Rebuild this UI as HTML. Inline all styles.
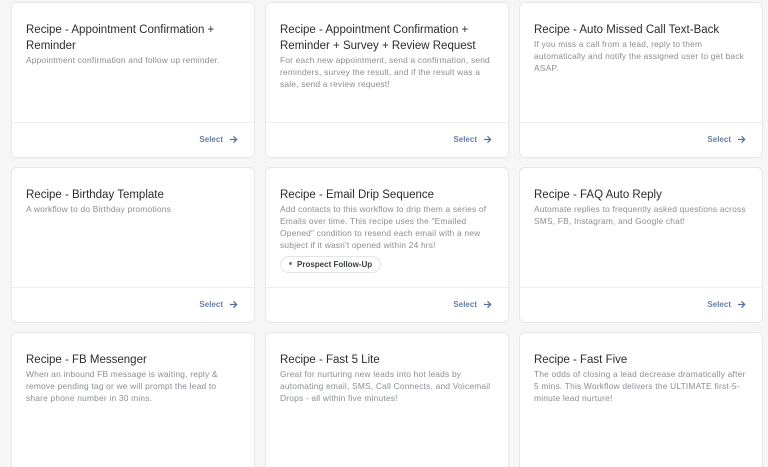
<!DOCTYPE html>
<html><head><style>
html,body{margin:0;background:#f6f6f7;width:768px;height:467px;overflow:hidden;font-family:"Liberation Sans",sans-serif;position:relative}
.c{position:absolute;width:244px;background:#fff;border:1px solid #e6e7ea;border-radius:6px;box-sizing:border-box;overflow:hidden}
.b{padding:14px 14px 0 14px;position:absolute;left:0;right:0;top:0}
.t{font-size:11.5px;color:#2a2c30;line-height:16px;margin:5px 0 0}
.d{font-size:8.4px;letter-spacing:.2px;color:#8a8d93;line-height:12px;margin-top:0}
.f{position:absolute;left:0;right:0;bottom:0;height:34px;border-top:1px solid #eceef1}
.s{position:absolute;right:16px;top:12px;font-size:8px;color:#6a7ca5;font-weight:bold}
.s svg{vertical-align:-2px;margin-left:6px}
.tag{display:inline-block;margin-top:5px;border:1px solid #e3e4e8;border-radius:10px;font-size:8px;font-weight:bold;color:#3a3c44;padding:3px 8px}
.tag i{display:inline-block;width:3px;height:3px;border-radius:50%;background:#6b6fb5;vertical-align:2px;margin-right:5px}
</style></head><body>
<div class="c" style="left:11px;top:2px;height:156px"><div class="b"><div class="t">Recipe - Appointment Confirmation +<br>Reminder</div><div class="d">Appointment confirmation and follow up reminder.</div></div><div class="f"><span class="s">Select<svg width="9" height="9" viewBox="0 0 10 10"><path d="M1 5h7M5 1.5L8.5 5 5 8.5" stroke="#5b6f9a" stroke-width="1.4" fill="none"/></svg></span></div></div>
<div class="c" style="left:265px;top:2px;height:156px"><div class="b"><div class="t">Recipe - Appointment Confirmation +<br>Reminder + Survey + Review Request</div><div class="d">For each new appointment, send a confirmation, send reminders, survey the result, and if the result was a sale, send a review request!</div></div><div class="f"><span class="s">Select<svg width="9" height="9" viewBox="0 0 10 10"><path d="M1 5h7M5 1.5L8.5 5 5 8.5" stroke="#5b6f9a" stroke-width="1.4" fill="none"/></svg></span></div></div>
<div class="c" style="left:519px;top:2px;height:156px"><div class="b"><div class="t">Recipe - Auto Missed Call Text-Back</div><div class="d">If you miss a call from a lead, reply to them automatically and notify the assigned user to get back ASAP.</div></div><div class="f"><span class="s">Select<svg width="9" height="9" viewBox="0 0 10 10"><path d="M1 5h7M5 1.5L8.5 5 5 8.5" stroke="#5b6f9a" stroke-width="1.4" fill="none"/></svg></span></div></div>
<div class="c" style="left:11px;top:167px;height:156px"><div class="b"><div class="t">Recipe - Birthday Template</div><div class="d">A workflow to do Birthday promotions</div></div><div class="f"><span class="s">Select<svg width="9" height="9" viewBox="0 0 10 10"><path d="M1 5h7M5 1.5L8.5 5 5 8.5" stroke="#5b6f9a" stroke-width="1.4" fill="none"/></svg></span></div></div>
<div class="c" style="left:265px;top:167px;height:156px"><div class="b"><div class="t">Recipe - Email Drip Sequence</div><div class="d">Add contacts to this workflow to drip them a series of Emails over time. This recipe uses the "Emailed Opened" condition to resend each email with a new subject if it wasn't opened within 24 hrs!</div><span class="tag"><i></i>Prospect Follow-Up</span></div><div class="f"><span class="s">Select<svg width="9" height="9" viewBox="0 0 10 10"><path d="M1 5h7M5 1.5L8.5 5 5 8.5" stroke="#5b6f9a" stroke-width="1.4" fill="none"/></svg></span></div></div>
<div class="c" style="left:519px;top:167px;height:156px"><div class="b"><div class="t">Recipe - FAQ Auto Reply</div><div class="d">Automate replies to frequently asked questions across SMS, FB, Instagram, and Google chat!</div></div><div class="f"><span class="s">Select<svg width="9" height="9" viewBox="0 0 10 10"><path d="M1 5h7M5 1.5L8.5 5 5 8.5" stroke="#5b6f9a" stroke-width="1.4" fill="none"/></svg></span></div></div>
<div class="c" style="left:11px;top:332px;height:135px;border-bottom:none;border-radius:6px 6px 0 0"><div class="b"><div class="t">Recipe - FB Messenger</div><div class="d">When an inbound FB message is waiting, reply &amp; remove pending tag or we will prompt the lead to share phone number in 30 mins.</div></div></div>
<div class="c" style="left:265px;top:332px;height:135px;border-bottom:none;border-radius:6px 6px 0 0"><div class="b"><div class="t">Recipe - Fast 5 Lite</div><div class="d">Great for nurturing new leads into hot leads by automating email, SMS, Call Connects, and Voicemail Drops - all within five minutes!</div></div></div>
<div class="c" style="left:519px;top:332px;height:135px;border-bottom:none;border-radius:6px 6px 0 0"><div class="b"><div class="t">Recipe - Fast Five</div><div class="d">The odds of closing a lead decrease dramatically after 5 mins. This Workflow delivers the ULTIMATE first-5-minute lead nurture!</div></div></div>
</body></html>
